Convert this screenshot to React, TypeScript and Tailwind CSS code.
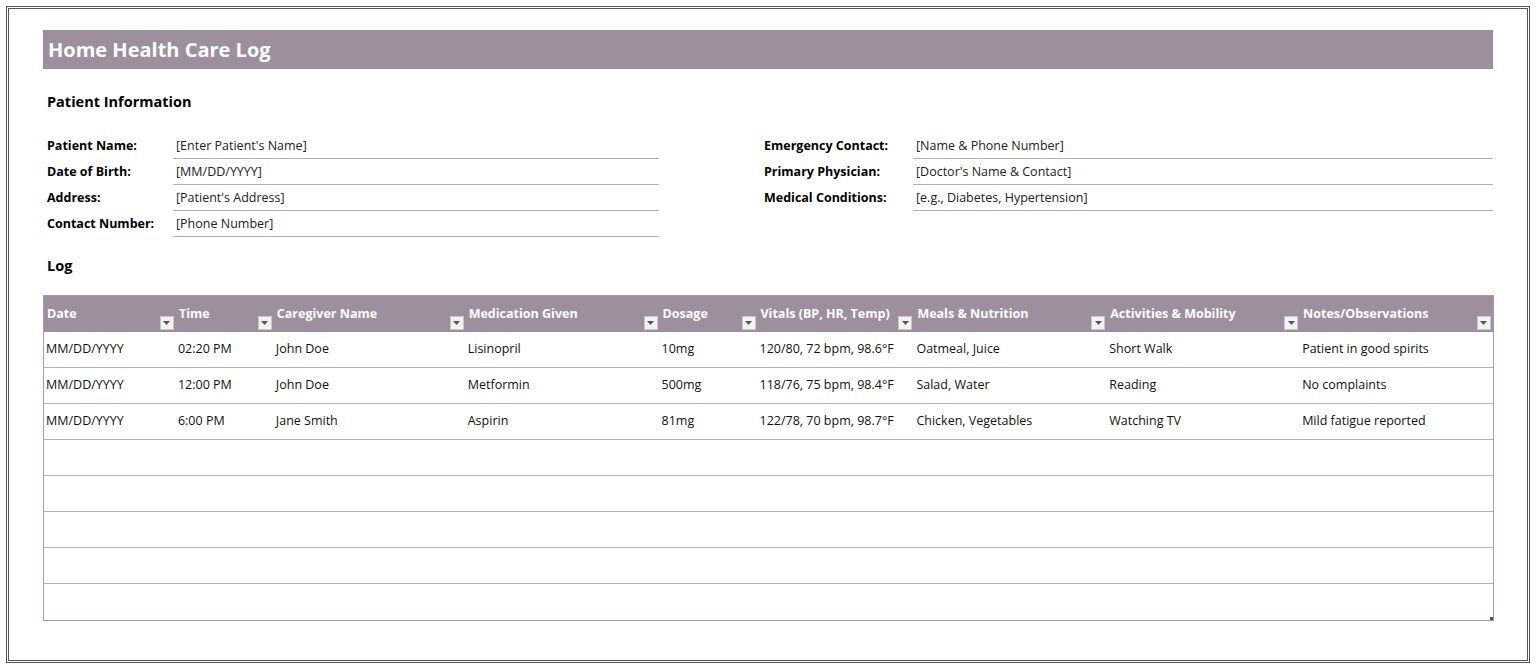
import React from "react";

const font = { fontFamily: '"Open Sans", "Noto Sans", sans-serif' };

const cols = [
  { h: "Date", w: 132 },
  { h: "Time", w: 98 },
  { h: "Caregiver Name", w: 192 },
  { h: "Medication Given", w: 194 },
  { h: "Dosage", w: 98 },
  { h: "Vitals (BP, HR, Temp)", w: 157 },
  { h: "Meals & Nutrition", w: 193 },
  { h: "Activities & Mobility", w: 193 },
  { h: "Notes/Observations", w: 193 },
];

const rows = [
  ["MM/DD/YYYY", "02:20 PM", "John Doe", "Lisinopril", "10mg", "120/80, 72 bpm, 98.6°F", "Oatmeal, Juice", "Short Walk", "Patient in good spirits"],
  ["MM/DD/YYYY", "12:00 PM", "John Doe", "Metformin", "500mg", "118/76, 75 bpm, 98.4°F", "Salad, Water", "Reading", "No complaints"],
  ["MM/DD/YYYY", "6:00 PM", "Jane Smith", "Aspirin", "81mg", "122/78, 70 bpm, 98.7°F", "Chicken, Vegetables", "Watching TV", "Mild fatigue reported"],
  ...Array(5).fill(Array(9).fill("")),
];

function Filter() {
  return (
    <div className="absolute right-[2px] bottom-[2px] w-[14px] h-[14px] bg-[#f3f3f3] border border-[#c8c8c8] flex items-center justify-center">
      <svg width="7" height="4" viewBox="0 0 7 4"><path d="M0 0h7L3.5 4z" fill="#555" /></svg>
    </div>
  );
}

function Field({ label, value, lw }: { label: string; value: string; lw: number }) {
  return (
    <div className="flex h-[26px]">
      <div className="font-bold text-[12.5px] text-black pt-[4px] pl-[4px]" style={{ width: lw }}>{label}</div>
      <div className="flex-1 border-b border-[#b0b0b0] text-[12.5px] text-[#222] pt-[4px] pl-[3px]">{value}</div>
    </div>
  );
}

export default function App() {
  return (
    <div className="w-[1536px] h-[669px] bg-white p-[6px]" style={font}>
      <div className="w-full h-[657px] border-[3px] border-double border-[#555] pt-[21px] pl-[34px] pr-[34px]">
        <div className="h-[39px] bg-[#9e8f9e] text-white font-bold text-[20px] flex items-center pl-[5px]">Home Health Care Log</div>
        <div className="font-bold text-[14.5px] text-black pl-[4px] mt-[22px]">Patient Information</div>
        <div className="flex mt-[20px]">
          <div className="w-[616px]">
            <Field label="Patient Name:" value="[Enter Patient's Name]" lw={130} />
            <Field label="Date of Birth:" value="[MM/DD/YYYY]" lw={130} />
            <Field label="Address:" value="[Patient's Address]" lw={130} />
            <Field label="Contact Number:" value="[Phone Number]" lw={130} />
          </div>
          <div className="w-[101px]" />
          <div className="flex-1">
            <Field label="Emergency Contact:" value="[Name & Phone Number]" lw={153} />
            <Field label="Primary Physician:" value="[Doctor's Name & Contact]" lw={153} />
            <Field label="Medical Conditions:" value="[e.g., Diabetes, Hypertension]" lw={153} />
          </div>
        </div>
        <div className="font-bold text-[14.5px] text-black pl-[4px] mt-[18px]">Log</div>
        <div className="mt-[18px] border border-[#a89aa8] w-[1451px] relative">
          <div className="flex h-[36px] bg-[#9e8f9e]">
            {cols.map((c) => (
              <div key={c.h} className="relative text-white font-bold text-[12.5px] pl-[3px] pt-[9px] whitespace-nowrap" style={{ width: c.w }}>
                {c.h}
                <Filter />
              </div>
            ))}
          </div>
          {rows.map((r, i) => (
            <div key={i} className={`flex h-[36px] items-center ${i < rows.length - 1 ? "border-b border-[#b8aeb8]" : ""}`}>
              {r.map((v: string, j: number) => (
                <div key={j} className="text-[12.5px] text-[#111] pl-[2px] whitespace-nowrap" style={{ width: cols[j].w }}>{v}</div>
              ))}
            </div>
          ))}
          <div className="absolute right-0 bottom-0 w-[3px] h-[3px] bg-[#4a4a8a]" />
        </div>
      </div>
    </div>
  );
}
